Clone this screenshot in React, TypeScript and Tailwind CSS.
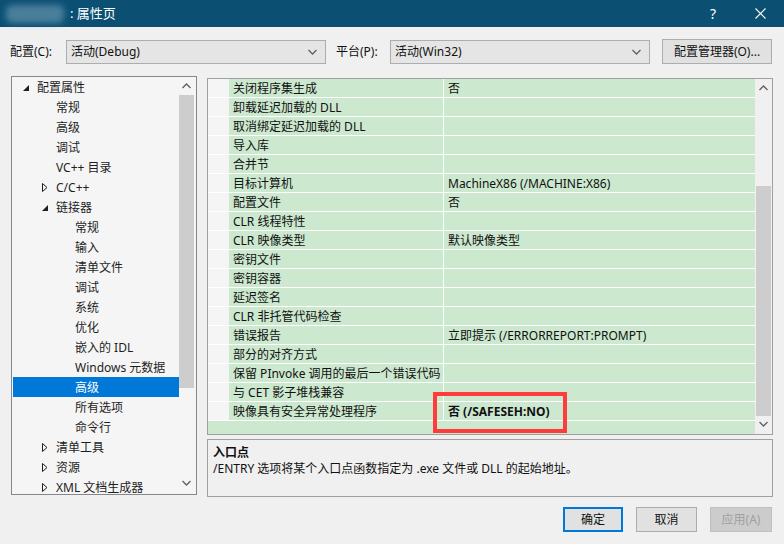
import React from "react";

const FONT = { fontFamily: '"Noto Sans", "Noto Sans CJK SC", sans-serif' };

type TreeItem = { text: string; level: number; kind: "open" | "closed" | "leaf"; selected?: boolean };

const tree: TreeItem[] = [
  { text: "配置属性", level: 0, kind: "open" },
  { text: "常规", level: 1, kind: "leaf" },
  { text: "高级", level: 1, kind: "leaf" },
  { text: "调试", level: 1, kind: "leaf" },
  { text: "VC++ 目录", level: 1, kind: "leaf" },
  { text: "C/C++", level: 1, kind: "closed" },
  { text: "链接器", level: 1, kind: "open" },
  { text: "常规", level: 2, kind: "leaf" },
  { text: "输入", level: 2, kind: "leaf" },
  { text: "清单文件", level: 2, kind: "leaf" },
  { text: "调试", level: 2, kind: "leaf" },
  { text: "系统", level: 2, kind: "leaf" },
  { text: "优化", level: 2, kind: "leaf" },
  { text: "嵌入的 IDL", level: 2, kind: "leaf" },
  { text: "Windows 元数据", level: 2, kind: "leaf" },
  { text: "高级", level: 2, kind: "leaf", selected: true },
  { text: "所有选项", level: 2, kind: "leaf" },
  { text: "命令行", level: 2, kind: "leaf" },
  { text: "清单工具", level: 1, kind: "closed" },
  { text: "资源", level: 1, kind: "closed" },
  { text: "XML 文档生成器", level: 1, kind: "closed" },
];

const rows: [string, string, boolean?][] = [
  ["关闭程序集生成", "否"],
  ["卸载延迟加载的 DLL", ""],
  ["取消绑定延迟加载的 DLL", ""],
  ["导入库", ""],
  ["合并节", ""],
  ["目标计算机", "MachineX86 (/MACHINE:X86)"],
  ["配置文件", "否"],
  ["CLR 线程特性", ""],
  ["CLR 映像类型", "默认映像类型"],
  ["密钥文件", ""],
  ["密钥容器", ""],
  ["延迟签名", ""],
  ["CLR 非托管代码检查", ""],
  ["错误报告", "立即提示 (/ERRORREPORT:PROMPT)"],
  ["部分的对齐方式", ""],
  ["保留 PInvoke 调用的最后一个错误代码", ""],
  ["与 CET 影子堆栈兼容", ""],
  ["映像具有安全异常处理程序", "否 (/SAFESEH:NO)", true],
];

function Chevron({ up }: { up?: boolean }) {
  return (
    <svg width="9" height="6" viewBox="0 0 9 6">
      <path d={up ? "M0.5 5 L4.5 1 L8.5 5" : "M0.5 1 L4.5 5 L8.5 1"} fill="none" stroke="#606060" strokeWidth="1.3" />
    </svg>
  );
}

function Triangle({ kind }: { kind: "open" | "closed" }) {
  if (kind === "open")
    return (
      <svg width="6" height="6" viewBox="0 0 6 6">
        <path d="M6 0 L6 6 L0 6 Z" fill="#1e1e1e" />
      </svg>
    );
  return (
    <svg width="6" height="9" viewBox="0 0 6 9">
      <path d="M0.5 0.5 L5 4.5 L0.5 8.5 Z" fill="none" stroke="#1e1e1e" strokeWidth="1" />
    </svg>
  );
}

function Combo({ text, w }: { text: string; w: string }) {
  return (
    <div className={`${w} h-[24px] border border-[#adadad] bg-[#e5e5e5] flex items-center pl-[4px] pr-[8px] justify-between`}>
      <span className="text-[12px] text-[#111] pt-[1px]">{text}</span>
      <Chevron />
    </div>
  );
}

export default function App() {
  return (
    <div className="w-[784px] h-[544px] bg-[#f0f0f0] flex flex-col overflow-hidden text-[12px] text-[#111]" style={FONT}>
      {/* title bar */}
      <div className="h-[27px] bg-[#0b5073] flex items-center relative shrink-0">
        <div className="ml-[6px] w-[58px] h-[18px] rounded-[6px] bg-[#5a8ba6] blur-[3px] opacity-80" />
        <span className="ml-[6px] text-white text-[13px]">: 属性页</span>
        <span className="absolute left-[710px] top-[3px] text-white text-[14px]">?</span>
        <svg className="absolute left-[755px] top-[8px]" width="11" height="11" viewBox="0 0 11 11">
          <path d="M0.5 0.5 L10.5 10.5 M10.5 0.5 L0.5 10.5" stroke="#fff" strokeWidth="1.1" />
        </svg>
      </div>

      {/* config row */}
      <div className="flex items-center mt-[12px] h-[25px] shrink-0">
        <span className="ml-[10px] w-[56px]">配置(C):</span>
        <Combo text="活动(Debug)" w="w-[260px]" />
        <span className="ml-[10px] w-[54px]">平台(P):</span>
        <Combo text="活动(Win32)" w="w-[260px]" />
        <div className="ml-[12px] w-[110px] h-[25px] border border-[#adadad] bg-[#e1e1e1] flex items-center justify-center">
          配置管理器(O)...
        </div>
      </div>

      {/* main */}
      <div className="flex mt-[12px] ml-[11px] gap-[10px] shrink-0">
        {/* tree */}
        <div className="w-[186px] h-[419px] border border-[#828790] bg-[#f5f5f5] flex overflow-hidden">
          <div className="flex-1 flex flex-col pl-[1px] overflow-hidden">
            {tree.map((t, i) => (
              <div
                key={i}
                className={`h-[20px] shrink-0 flex items-center pt-[1px] ${t.selected ? "bg-[#0078d7] text-white" : "text-[#1e1e1e]"}`}
                style={{ paddingLeft: 10 + t.level * 19 }}
              >
                <div className="w-[14px] flex items-center">
                  {t.kind !== "leaf" && <Triangle kind={t.kind} />}
                </div>
                <span className="whitespace-nowrap">{t.text}</span>
              </div>
            ))}
          </div>
          <div className="w-[15px] mr-[2px] flex flex-col items-center">
            <div className="h-[18px] flex items-center justify-center"><Chevron up /></div>
            <div className="w-[15px] h-[293px] bg-[#cdcdcd]" />
            <div className="flex-1" />
            <div className="h-[18px] flex items-center justify-center mb-[2px]"><Chevron /></div>
          </div>
        </div>

        {/* right column */}
        <div className="w-[566px] flex flex-col pt-[2px]">
          <div className="h-[357px] border border-[#a0a0a0] bg-[#cce8cf] flex relative">
            <div className="flex-1 flex flex-col">
              {rows.map(([n, v, b], i) => (
                <div key={i} className="h-[19px] flex border-b border-white shrink-0">
                  <div className="w-[21px] bg-[#f5f5f5]" />
                  <div className="w-[215px] border-r border-white pl-[4px] pt-[1px] flex items-center whitespace-nowrap overflow-hidden">{n}</div>
                  <div className={`flex-1 pl-[4px] pt-[1px] flex items-center whitespace-nowrap ${b ? "font-bold" : ""}`}>{v}</div>
                </div>
              ))}
            </div>
            <div className="w-[17px] bg-[#f0f0f0] flex flex-col items-center">
              <div className="h-[18px] flex items-center justify-center"><Chevron up /></div>
              <div className="h-[89px]" />
              <div className="w-[15px] h-[231px] bg-[#cdcdcd]" />
              <div className="flex-1" />
              <div className="h-[16px] flex items-center justify-center mb-[2px]"><Chevron /></div>
            </div>
            <div className="absolute left-[225px] top-[313px] w-[134px] h-[41px] border-[4px] border-[#ff3b3b]" />
          </div>
          <div className="mt-[4px] h-[58px] border border-[#a0a0a0] bg-[#f0f0f0] pl-[5px] pt-[5px] flex flex-col">
            <span className="font-bold leading-[16px]">入口点</span>
            <span className="leading-[16px]">/ENTRY 选项将某个入口点函数指定为 .exe 文件或 DLL 的起始地址。</span>
          </div>
        </div>
      </div>

      {/* buttons */}
      <div className="flex mt-[10px] ml-[563px] gap-[13px]">
        <div className="w-[60px] h-[25px] border-2 border-[#0078d7] bg-[#e1e1e1] flex items-center justify-center">确定</div>
        <div className="w-[61px] h-[25px] border border-[#adadad] bg-[#e1e1e1] flex items-center justify-center">取消</div>
        <div className="w-[62px] h-[25px] border border-[#bfbfbf] bg-[#cccccc] text-[#a0a0a0] flex items-center justify-center">应用(A)</div>
      </div>
    </div>
  );
}
